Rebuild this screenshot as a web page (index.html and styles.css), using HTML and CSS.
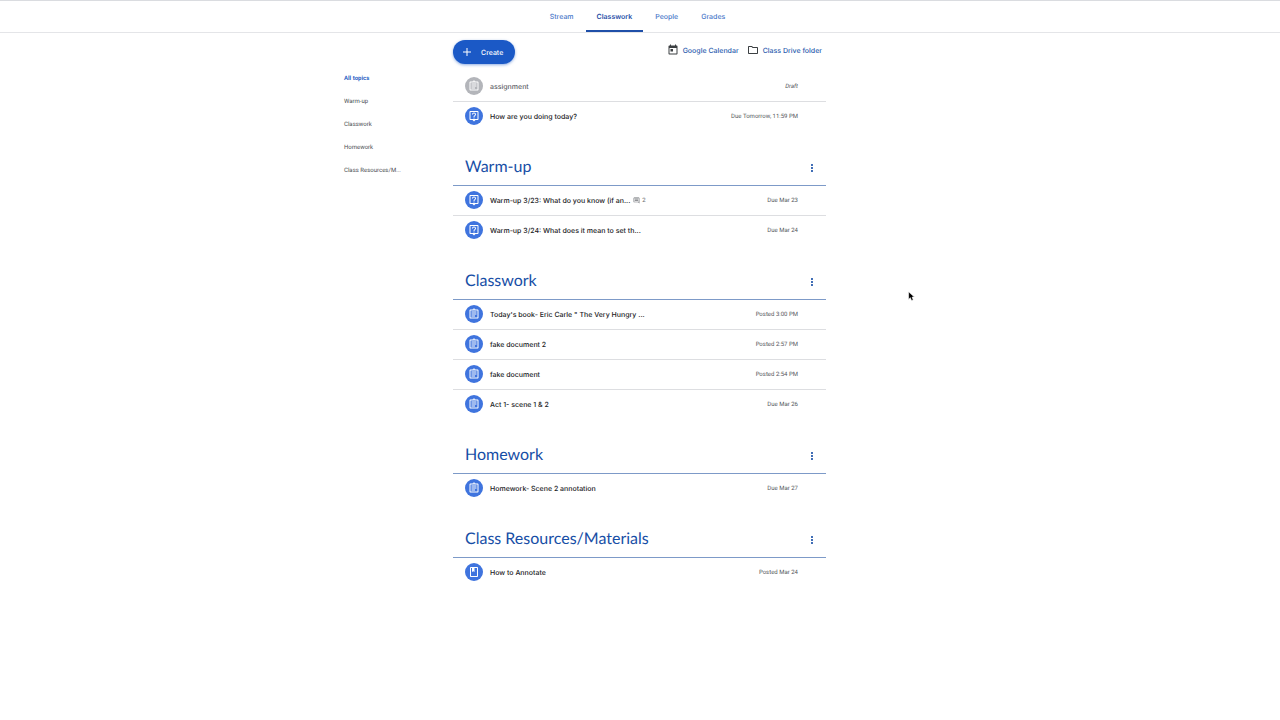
FILE: index.html
```
<!DOCTYPE html>
<html lang="en">
<head>
<meta charset="utf-8">
<meta name="viewport" content="width=device-width, initial-scale=1">
<title>Classwork</title>
<link rel="stylesheet" href="styles.css">
</head>
<body>
<svg class="sprite" aria-hidden="true">
  <symbol id="assignment" viewBox="0 0 24 24"><path d="M7 15h7v2H7zm0-4h10v2H7zm0-4h10v2H7zm12-4h-4.180C14.400 1.840 13.300 1 12 1s-2.400.840-2.820 2H5c-1.100 0-2 .900-2 2v14c0 1.100.900 2 2 2h14c1.100 0 2-.900 2-2V5c0-1.100-.900-2-2-2zm-7-.250c.410 0 .750.340.750.750s-.340.750-.750.750-.750-.340-.750-.750.340-.750.750-.750zM19 19H5V5h14v14z"/></symbol>
  <symbol id="question" viewBox="0 0 24 24"><path d="M19 2H5c-1.110 0-2 .900-2 2v14c0 1.100.890 2 2 2h4l3 3 3-3h4c1.100 0 2-.900 2-2V4c0-1.100-.900-2-2-2zm0 16H5V4h14v14zm-8-3h2v2h-2zm1-8c1.100 0 2 .900 2 2 0 2-3 1.750-3 5h2c0-2.250 3-2.500 3-5 0-2.210-1.790-4-4-4S8 6.790 8 9h2c0-1.100.900-2 2-2z"/></symbol>
  <symbol id="material" viewBox="0 0 24 24"><path d="M18 2H6c-1.100 0-2 .900-2 2v16c0 1.100.900 2 2 2h12c1.100 0 2-.900 2-2V4c0-1.100-.900-2-2-2zm0 18H6V4h2v8l2.500-1.500L13 12V4h5v16z"/></symbol>
  <symbol id="more" viewBox="0 0 24 24"><path d="M12 8c1.100 0 2-.900 2-2s-.900-2-2-2-2 .900-2 2 .900 2 2 2zm0 2c-1.100 0-2 .900-2 2s.900 2 2 2 2-.900 2-2-.900-2-2-2zm0 6c-1.100 0-2 .900-2 2s.900 2 2 2 2-.900 2-2-.900-2-2-2z"/></symbol>
  <symbol id="calendar" viewBox="0 0 24 24"><path d="M19 3h-1V1h-2v2H8V1H6v2H5c-1.110 0-2 .900-2 2v14c0 1.100.890 2 2 2h14c1.100 0 2-.900 2-2V5c0-1.100-.900-2-2-2zm0 16H5V8h14v11zM7 10h5v5H7z"/></symbol>
  <symbol id="folder" viewBox="0 0 24 24"><path d="M9.170 6l2 2H20v10H4V6h5.170M10 4H4c-1.100 0-2 .900-2 2v12c0 1.100.900 2 2 2h16c1.100 0 2-.900 2-2V8c0-1.100-.900-2-2-2h-8l-2-2z"/></symbol>
  <symbol id="plus" viewBox="0 0 24 24"><path d="M20 13h-7v7h-2v-7H4v-2h7V4h2v7h7v2z"/></symbol>
  <symbol id="comment" viewBox="0 0 24 24"><path d="M22 4c0-1.100-.900-2-2-2H4c-1.100 0-2 .900-2 2v12c0 1.100.900 2 2 2h14l4 4V4zM20 16H4V4h16v12zM6 12h12v2H6zm0-3h12v2H6zm0-3h12v2H6z"/></symbol>
</svg>

<nav class="tabs" aria-label="Class">
  <a class="tab" href="#">Stream</a>
  <a class="tab tab-active" href="#" aria-current="page">Classwork</a>
  <a class="tab" href="#">People</a>
  <a class="tab" href="#">Grades</a>
</nav>

<div class="page">
  <nav class="topics" aria-label="Topics">
    <a class="topic topic-active" href="#">All topics</a>
    <a class="topic" href="#warmup">Warm-up</a>
    <a class="topic" href="#classwork">Classwork</a>
    <a class="topic" href="#homework">Homework</a>
    <a class="topic" href="#resources">Class Resources/M...</a>
  </nav>

  <main class="main">
    <div class="toolbar">
      <button class="create" type="button"><svg class="create-icon"><use href="#plus"/></svg>Create</button>
      <div class="links">
        <a class="link" href="#"><svg class="link-icon"><use href="#calendar"/></svg>Google Calendar</a>
        <a class="link" href="#"><svg class="link-icon"><use href="#folder"/></svg>Class Drive folder</a>
      </div>
    </div>

    <ul class="list">
      <li class="row row-draft"><span class="badge"><svg class="badge-icon"><use href="#assignment"/></svg></span><span class="title">assignment</span><span class="date">Draft</span></li>
      <li class="row"><span class="badge"><svg class="badge-icon"><use href="#question"/></svg></span><span class="title">How are you doing today?</span><span class="date">Due Tomorrow, 11:59 PM</span></li>
    </ul>

    <section class="section" id="warmup">
      <header class="section-head"><h2 class="section-title">Warm-up</h2><button class="more" type="button" aria-label="Warm-up options"><svg class="more-icon"><use href="#more"/></svg></button></header>
      <ul class="list">
        <li class="row"><span class="badge"><svg class="badge-icon"><use href="#question"/></svg></span><span class="title">Warm-up 3/23: What do you know (if an...</span><span class="comments"><svg class="comment-icon"><use href="#comment"/></svg>2</span><span class="date">Due Mar 23</span></li>
        <li class="row"><span class="badge"><svg class="badge-icon"><use href="#question"/></svg></span><span class="title">Warm-up 3/24: What does it mean to set th...</span><span class="date">Due Mar 24</span></li>
      </ul>
    </section>

    <section class="section" id="classwork">
      <header class="section-head"><h2 class="section-title">Classwork</h2><button class="more" type="button" aria-label="Classwork options"><svg class="more-icon"><use href="#more"/></svg></button></header>
      <ul class="list">
        <li class="row"><span class="badge"><svg class="badge-icon"><use href="#assignment"/></svg></span><span class="title">Today's book- Eric Carle " The Very Hungry ...</span><span class="date">Posted 3:00 PM</span></li>
        <li class="row"><span class="badge"><svg class="badge-icon"><use href="#assignment"/></svg></span><span class="title">fake document 2</span><span class="date">Posted 2:57 PM</span></li>
        <li class="row"><span class="badge"><svg class="badge-icon"><use href="#assignment"/></svg></span><span class="title">fake document</span><span class="date">Posted 2:54 PM</span></li>
        <li class="row"><span class="badge"><svg class="badge-icon"><use href="#assignment"/></svg></span><span class="title">Act 1- scene 1 &amp; 2</span><span class="date">Due Mar 26</span></li>
      </ul>
    </section>

    <section class="section" id="homework">
      <header class="section-head"><h2 class="section-title">Homework</h2><button class="more" type="button" aria-label="Homework options"><svg class="more-icon"><use href="#more"/></svg></button></header>
      <ul class="list">
        <li class="row"><span class="badge"><svg class="badge-icon"><use href="#assignment"/></svg></span><span class="title">Homework- Scene 2 annotation</span><span class="date">Due Mar 27</span></li>
      </ul>
    </section>

    <section class="section" id="resources">
      <header class="section-head"><h2 class="section-title">Class Resources/Materials</h2><button class="more" type="button" aria-label="Class Resources/Materials options"><svg class="more-icon"><use href="#more"/></svg></button></header>
      <ul class="list">
        <li class="row"><span class="badge"><svg class="badge-icon"><use href="#material"/></svg></span><span class="title">How to Annotate</span><span class="date">Posted Mar 24</span></li>
      </ul>
    </section>
  </main>
</div>

<svg class="cursor" viewBox="0 0 12 18" aria-hidden="true"><path d="M1 1v13l3-3 2 5 3-1-2-5h4z"/></svg>
</body>
</html>
```

FILE: styles.css
```
* { box-sizing: border-box; }

body {
  margin: 0;
  background: #fff;
  color: #3c4043;
  font-family: Roboto, "Liberation Sans", sans-serif;
  font-size: 6px;
  text-rendering: geometricPrecision;
}

a { color: inherit; text-decoration: none; }
svg { fill: currentColor; flex: none; }
button { border: 0; padding: 0; font: inherit; cursor: pointer; text-rendering: inherit; }

.sprite { display: none; }

.tabs {
  display: flex;
  justify-content: center;
  gap: 1px;
  height: 33px;
  padding-right: 5px;
  border-top: 1px solid #dadce0;
  border-bottom: 1px solid #e4e5e8;
}

.tab {
  display: flex;
  align-items: center;
  padding: 2px 11px 0;
  border-bottom: 2px solid transparent;
  color: #4a78c9;
  font-family: Inter, Roboto, sans-serif;
  font-size: 7px;
  font-weight: 500;
}

.tab-active {
  border-color: #1f4fa8;
  color: #1f4fa8;
  font-weight: 600;
}

.page {
  display: grid;
  grid-template-columns: 1fr 373px 1fr;
  padding-right: 1px;
}

.topics {
  display: flex;
  flex-direction: column;
  justify-self: end;
  width: 109px;
  padding-top: 34px;
}

.topic { line-height: 23px; color: #4a4d51; }
.topic-active { color: #2a62c4; font-weight: 700; }

.main { padding-top: 7px; }

.toolbar {
  display: flex;
  justify-content: space-between;
  align-items: flex-start;
  margin-bottom: 8px;
}

.create {
  display: flex;
  align-items: center;
  gap: 8px;
  height: 24px;
  padding: 0 12px 0 8px;
  border-radius: 12px;
  background: #1b59c6;
  box-shadow: 0 1px 3px #1b59c680;
  color: #fff;
  font-family: Inter, Roboto, sans-serif;
  font-size: 7px;
  font-weight: 500;
}

.create-icon { width: 12px; height: 12px; }

.links { display: flex; gap: 8px; padding: 4px 4px 0 0; }

.link {
  display: flex;
  align-items: center;
  gap: 4px;
  color: #2a5cae;
  font-family: Inter, Roboto, sans-serif;
  font-size: 7px;
  font-weight: 500;
}

.link-icon { width: 12px; height: 12px; color: #3c4043; }

.list { margin: 0; padding: 0; list-style: none; }

.row {
  display: flex;
  align-items: center;
  height: 30px;
  padding: 0 28px 1px 12px;
  border-bottom: 1px solid #dddee1;
}

.row:last-child { border-color: transparent; }

.badge {
  display: grid;
  place-items: center;
  width: 18px;
  height: 18px;
  margin-right: 7px;
  border-radius: 50%;
  background: #3f74de;
  color: #fff;
}

.badge-icon { width: 12px; height: 12px; }

.title {
  color: #202124;
  font-family: Inter, Roboto, sans-serif;
  font-size: 7px;
  font-weight: 500;
  white-space: nowrap;
}

.row-draft .badge { background: #b3b5ba; }
.row-draft .title { color: #5f6368; }
.row-draft .date { font-style: italic; }

.comments {
  display: flex;
  align-items: center;
  gap: 2px;
  margin-left: 3px;
  color: #6b6e73;
}

.comment-icon { width: 7px; height: 7px; }

.date { margin-left: auto; color: #55585c; white-space: nowrap; }

.section { padding-top: 18px; }

.section-head {
  display: flex;
  align-items: center;
  justify-content: space-between;
  height: 36px;
  padding: 0 8px 0 12px;
  border-bottom: 1px solid #7d9ac8;
  color: #174ea6;
}

.section-title {
  margin: 0;
  padding-bottom: 2px;
  font-family: Lato, Roboto, sans-serif;
  font-size: 16px;
  font-weight: 400;
}

.more {
  display: grid;
  place-items: center;
  width: 12px;
  height: 12px;
  background: none;
  color: #174ea6;
}

.more-icon { width: 12px; height: 12px; }

/* Pointer drawn over the page */
.cursor {
  position: absolute;
  top: 291px;
  left: 908px;
  width: 7px;
  height: 11px;
  fill: #000;
  stroke: #fff;
}
```
